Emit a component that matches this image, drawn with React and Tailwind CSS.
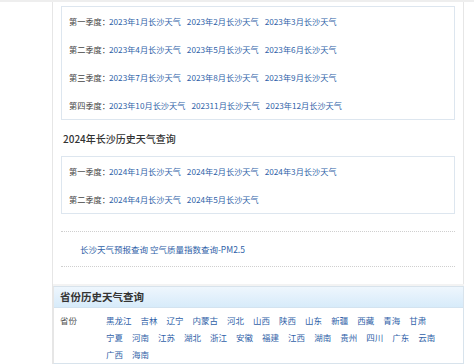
import React from "react";

const font = { fontFamily: '"Noto Sans CJK SC", "Noto Sans", sans-serif' };

const q2023 = [
  ["第一季度：", ["2023年1月长沙天气", "2023年2月长沙天气", "2023年3月长沙天气"]],
  ["第二季度：", ["2023年4月长沙天气", "2023年5月长沙天气", "2023年6月长沙天气"]],
  ["第三季度：", ["2023年7月长沙天气", "2023年8月长沙天气", "2023年9月长沙天气"]],
  ["第四季度：", ["2023年10月长沙天气", "202311月长沙天气", "2023年12月长沙天气"]],
];
const q2024 = [
  ["第一季度：", ["2024年1月长沙天气", "2024年2月长沙天气", "2024年3月长沙天气"]],
  ["第二季度：", ["2024年4月长沙天气", "2024年5月长沙天气"]],
];

const provinces = [
  "黑龙江", "吉林", "辽宁", "内蒙古", "河北", "山西", "陕西", "山东", "新疆", "西藏", "青海", "甘肃",
  "宁夏", "河南", "江苏", "湖北", "浙江", "安徽", "福建", "江西", "湖南", "贵州", "四川", "广东", "云南",
  "广西", "海南",
];

function QBox({ rows }) {
  return (
    <div className="mx-[8px] border border-[#dde6ef]">
      {rows.map(([label, links]) => (
        <div key={label} className="flex items-center h-[28px] pl-[7px] text-[8.2px] leading-none whitespace-nowrap">
          <span className="text-[#444] w-[40px] shrink-0">{label}</span>
          <div className="flex gap-[6px]">
            {links.map((l) => (
              <a key={l} className="text-[#2f5fa8]">{l}</a>
            ))}
          </div>
        </div>
      ))}
    </div>
  );
}

export default function App() {
  return (
    <div className="w-[474px] h-[364px] overflow-hidden bg-white flex flex-col" style={font}>
      <div className="h-[2px] bg-[#eeeeee] shrink-0" />
      <div className="flex flex-1 min-h-0">
        <div className="w-[53px] shrink-0 border-r border-[#e6e6e6]" />
        <div className="w-[411px] shrink-0 flex flex-col bg-[#f3f3f3]">
          <div className="bg-white border-r border-[#e6e6e6] pt-[4px] pb-[17px]">
            <QBox rows={q2023} />
            <div className="h-[36px] flex items-center pl-[10px] text-[10px] font-medium text-[#333]">
              2024年长沙历史天气查询
            </div>
            <QBox rows={q2024} />
            <div className="mx-[8px] mt-[17px] border-t border-dotted border-[#cfcfcf]" />
            <div className="h-[34px] flex items-center pl-[27px] text-[8.5px] text-[#2f5fa8]">
              长沙天气预报查询 空气质量指数查询-PM2.5
            </div>
            <div className="mx-[8px] border-t border-dotted border-[#cfcfcf]" />
          </div>
          <div className="h-[6px]" />
          <div className="flex-1 bg-white border border-[#d8e3ec] border-l-[#e6e6e6]">
            <div className="h-[21px] flex items-center pl-[6px] text-[10.5px] font-bold text-[#333] bg-gradient-to-b from-[#eef6fd] to-[#d7ebfa] border-b border-[#d3e3f0]">
              省份历史天气查询
            </div>
            <div className="flex pt-[4px] text-[8.5px] leading-[17px]">
              <div className="w-[52px] pl-[6px] text-[#555]">省份</div>
              <div className="flex flex-wrap w-[336px] gap-x-[9px]">
                {provinces.map((p) => (
                  <a key={p} className="text-[#2f5fa8]">{p}</a>
                ))}
              </div>
            </div>
          </div>
        </div>
        <div className="flex-1" />
      </div>
    </div>
  );
}
